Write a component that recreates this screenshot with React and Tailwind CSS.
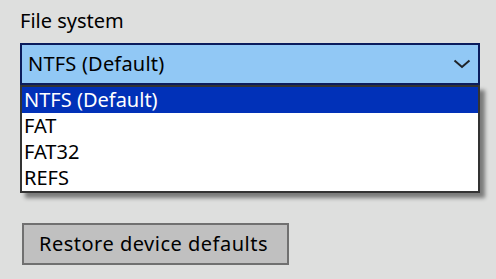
export default function App() {
  const options = ['NTFS (Default)', 'FAT', 'FAT32', 'REFS']

  return (
    <div
      className="w-[496px] h-[279px] bg-[#dedfde] text-black px-5 pt-[8px] overflow-hidden"
      style={{ fontFamily: '"Noto Sans", sans-serif' }}
    >
      <div className="text-[20px] leading-[26px] h-[35px]">File system</div>

      <div className="relative w-[460px]">
        <div className="h-[42px] border-2 border-[#0b1c5c] bg-[#91c8f5] flex items-center justify-between pl-[6px] pr-[7px]">
          <span className="text-[20px] leading-[26px] tracking-[0.2px]">NTFS (Default)</span>
          <svg width="18" height="10" viewBox="0 0 18 10">
            <path d="M1.5 1.5 L9 8 L16.5 1.5" fill="none" stroke="#1f2328" strokeWidth="2" />
          </svg>
        </div>

        <div className="absolute left-0 top-[42px] w-[460px] border-2 border-[#333333] bg-white shadow-[5px_5px_4px_rgba(0,0,0,0.45)]">
          {options.map((opt, i) => (
            <div
              key={opt}
              className={
                i === 0
                  ? 'h-[26px] flex items-center pl-[2px] bg-[#0131b8] text-white text-[20px]'
                  : 'h-[26px] flex items-center pl-[2px] text-[20px]'
              }
            >
              {opt}
            </div>
          ))}
        </div>
      </div>

      <button className="mt-[138px] ml-[2px] w-[267px] h-[42px] border-2 border-[#707070] bg-[#c0c0c0] text-[20px] tracking-[0.5px] flex items-center justify-center pr-[4px]">
        Restore device defaults
      </button>
    </div>
  )
}
